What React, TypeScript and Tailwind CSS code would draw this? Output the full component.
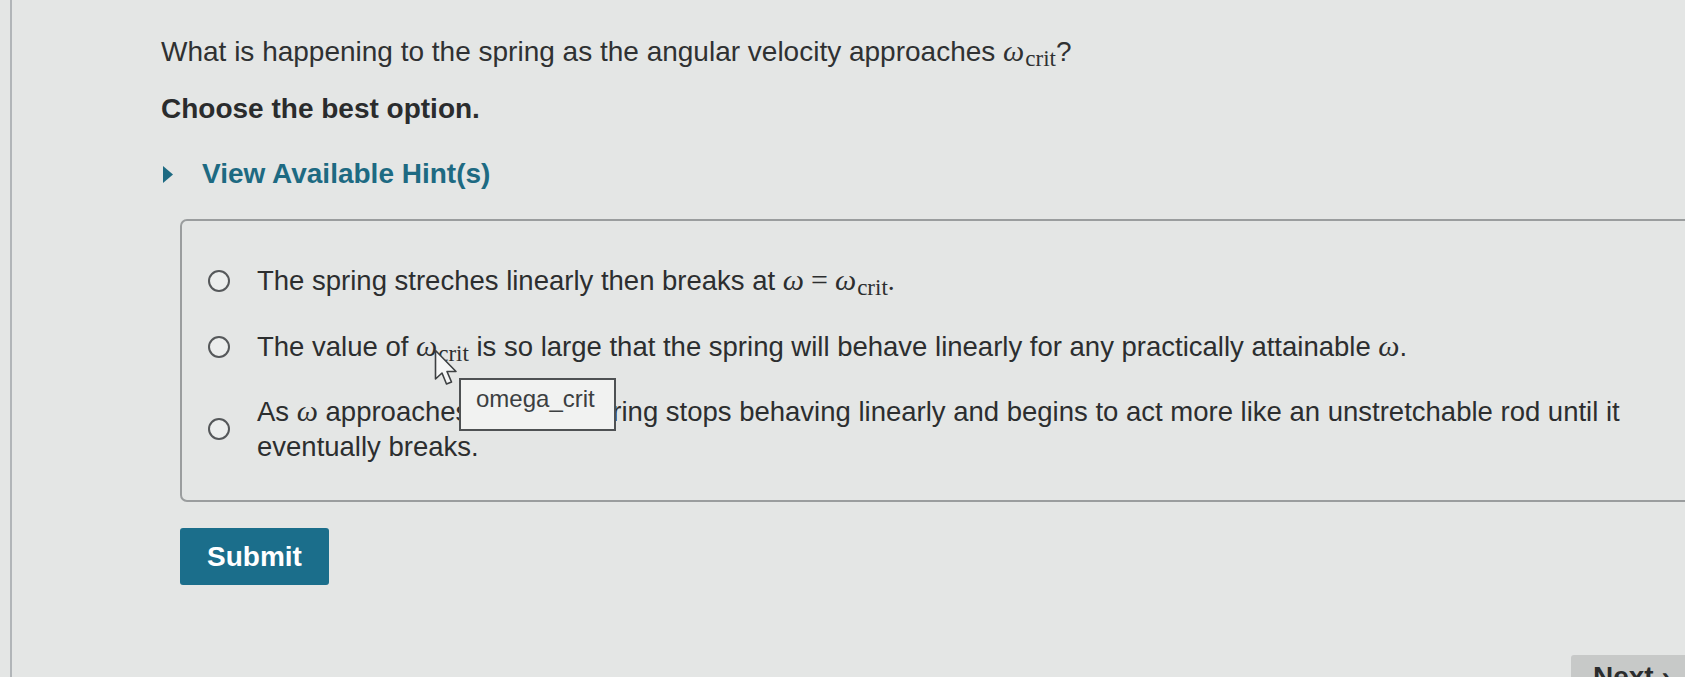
import type { ReactNode } from "react";

function W({ children }: { children?: ReactNode }) {
  return (
    <span className="font-['Liberation_Serif',serif] leading-[0]">
      <span className="text-[30px] italic leading-[0]">ω</span>
      {children && (
        <span className="text-[23px] align-[-5px] ml-[1px] leading-[0]">
          {children}
        </span>
      )}
    </span>
  );
}

function Radio() {
  return (
    <span className="shrink-0 w-[22px] h-[22px] rounded-full border-2 border-[#55585a] bg-[#eceeed]" />
  );
}

function Option({ children, wide }: { children: ReactNode; wide?: boolean }) {
  return (
    <label className="flex items-center gap-[27px]">
      <Radio />
      <span
        className={`${wide ? "w-[1390px] leading-[35px]" : "leading-[32px]"} text-[27.5px] text-[#2c2e2f]`}
      >
        {children}
      </span>
    </label>
  );
}

function Cursor() {
  return (
    <svg
      className="absolute left-[434px] top-[349px]"
      width="30"
      height="40"
      viewBox="0 0 30 40"
    >
      <path
        d="M1.5 1.5 L1.5 30 L8 24 L12.5 35 L17.5 33 L13 22.5 L22 22.5 Z"
        fill="#f5f6f6"
        stroke="#3d4042"
        strokeWidth="1.6"
        strokeLinejoin="round"
      />
    </svg>
  );
}

export default function App() {
  return (
    <div className="relative h-[677px] w-full overflow-hidden bg-[#e4e6e5] font-['Liberation_Sans',Arial,sans-serif] text-[28px]">
      <div className="ml-[10px] h-full border-l-2 border-[#b1b5b8] pl-[149px] pt-[36px]">
        <p className="leading-[32px] text-[#2f3132]">
          What is happening to the spring as the angular velocity approaches{" "}
          <W>crit</W>?
        </p>

        <p className="mt-[25px] leading-[32px] font-bold text-[#2a2c2d]">
          Choose the best option.
        </p>

        <button
          type="button"
          className="mt-[33px] flex items-center gap-[29px] pl-[2px] leading-[32px] font-bold text-[#1d6a82] text-left"
        >
          <svg width="10" height="17" viewBox="0 0 10 17">
            <path d="M0 0 L10 8.5 L0 17 Z" fill="#1d6a82" />
          </svg>
          View Available Hint(s)
        </button>

        <div className="mt-[29px] ml-[19px] -mr-[80px] h-[283px] rounded-[7px] border-2 border-[#9a9d9e] pl-[26px] pt-[44px]">
          <Option>
            The spring streches linearly then breaks at <W />
            <span className="font-['Liberation_Serif',serif] mx-[7px] text-[30px] leading-[0]">
              =
            </span>
            <W>crit</W>
            <span className="font-['Liberation_Serif',serif]">.</span>
          </Option>
          <div className="mt-[34px]">
            <Option>
              The value of <W>crit</W> is so large that the spring will behave
              linearly for any practically attainable <W />.
            </Option>
          </div>
          <div className="mt-[31px]">
            <Option wide>
              As <W /> approaches <W>crit</W> the spring stops behaving
              linearly and begins to act more like an unstretchable rod until it
              eventually breaks.
            </Option>
          </div>
        </div>

        <button
          type="button"
          className="mt-[26px] ml-[19px] block w-[149px] h-[57px] rounded-[3px] bg-[#1b6e8b] font-bold text-white leading-[32px]"
        >
          Submit
        </button>

        <div className="mt-[70px] -mr-[40px] flex justify-end">
          <button
            type="button"
            className="shrink-0 w-[154px] h-[44px] rounded-[3px] bg-[#c7c9c8] font-bold text-[#2a2c2d] leading-[32px] text-left pl-[22px]"
          >
            Next ›
          </button>
        </div>
      </div>

      <div className="absolute left-[459px] top-[378px] w-[157px] h-[53px] border-2 border-[#4e5153] bg-[#f1f2f1] px-[15px] pt-[4px] text-[24px] leading-[30px] text-[#3c3f41]">
        omega_crit
      </div>
      <Cursor />
    </div>
  );
}
